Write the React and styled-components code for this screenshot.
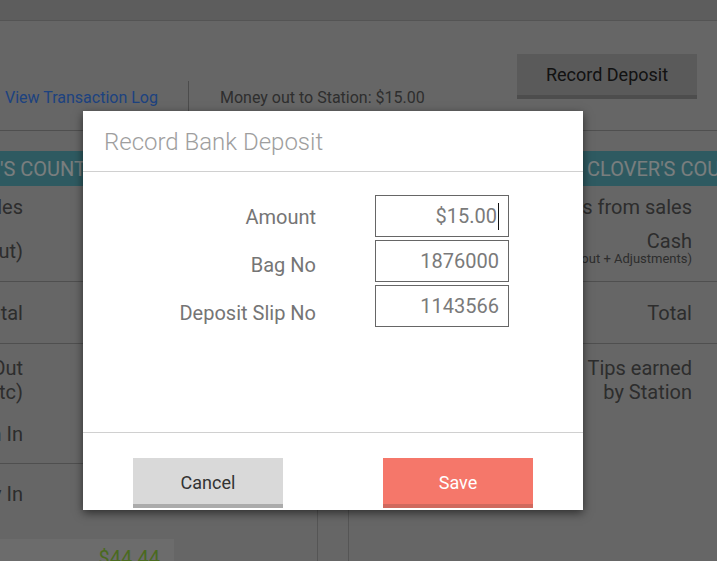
import React from "react";
import styled, { createGlobalStyle } from "styled-components";

const GlobalStyle = createGlobalStyle`
  html, body { margin: 0; padding: 0; }
  body {
    font-family: Roboto, "Noto Sans", "Liberation Sans", sans-serif;
    background: #cccccc;
    overflow: hidden;
  }
  * { box-sizing: border-box; }
`;

const Page = styled.div`
  position: relative;
  width: 717px;
  height: 561px;
  overflow: hidden;
  background: #cccccc;
`;

const TopBar = styled.div`
  height: 21px;
  background: #bababa;
  border-bottom: 1px solid #a8a8a8;
`;

const ActionBar = styled.div`
  height: 110px;
  display: flex;
  border-bottom: 1px solid #9e9e9e;
  padding: 0 20px 0 5px;
`;

const InfoGroup = styled.div`
  align-self: flex-end;
  margin-bottom: 17px;
  height: 32px;
  display: flex;
  align-items: center;
  gap: 30px;
  font-size: 16px;
`;

const LinkText = styled.a`
  color: #3a84ff;
  text-decoration: none;
`;

const VSeparator = styled.span`
  width: 1px;
  align-self: stretch;
  background: #989898;
`;

const InfoText = styled.span`
  color: #5c5c5c;
  margin-left: 1px;
`;

const BarButton = styled.button`
  margin: 33px 0 0 auto;
  align-self: flex-start;
  width: 180px;
  height: 45px;
  border: none;
  border-bottom: 4px solid #9a9a9a;
  background: #b4b4b4;
  color: #242424;
  font-family: inherit;
  font-size: 18px;
  padding: 0;
`;

const Columns = styled.div`
  display: flex;
  align-items: stretch;
  height: 430px;
`;

const Column = styled.div`
  display: flex;
  flex-direction: column;
  min-width: 0;
  overflow: hidden;
  width: ${(p) => (p.$width ? `${p.$width}px` : "auto")};
  flex: ${(p) => (p.$width ? "none" : "1 1 0")};
  margin-left: ${(p) => p.$offset || 0}px;
  border-right: ${(p) => (p.$lineRight ? "1px solid #aaaaaa" : "none")};
  border-left: ${(p) => (p.$lineLeft ? "1px solid #aaaaaa" : "none")};
`;

const ColumnHeader = styled.div`
  flex: none;
  margin-top: 20px;
  height: 35px;
  background: #5cb4c2;
  color: #f2fcfd;
  font-size: 20px;
  text-transform: uppercase;
  display: flex;
  align-items: center;
  white-space: nowrap;
  justify-content: ${(p) => (p.$alignEnd ? "flex-end" : "flex-start")};
  padding-left: ${(p) => p.$padLeft || 0}px;
  padding-right: ${(p) => p.$padRight || 0}px;
`;

const Row = styled.div`
  flex: none;
  height: ${(p) => p.$height}px;
  display: flex;
  flex-direction: column;
  justify-content: ${(p) => (p.$center ? "center" : "flex-start")};
  padding-top: ${(p) => p.$padTop || 0}px;
  padding-right: ${(p) => p.$padRight}px;
  border-bottom: ${(p) => (p.$line ? "1px solid #9e9e9e" : "none")};
`;

const Line = styled.div`
  display: flex;
  justify-content: flex-end;
  white-space: nowrap;
  color: #5a5a5a;
  font-size: ${(p) => p.$size || 20}px;
  line-height: ${(p) => p.$lh || 24}px;
  margin-top: ${(p) => p.$mt || 0}px;
`;

const TotalBox = styled.div`
  flex: none;
  margin-top: 15px;
  width: 174px;
  height: 40px;
  background: #d8d8d8;
  display: flex;
  justify-content: flex-end;
  padding: 7px 14px 0 0;
  font-size: 20px;
  line-height: 24px;
  color: #94d43e;
`;

const Overlay = styled.div`
  position: absolute;
  inset: 0;
  background: rgba(0, 0, 0, 0.5);
`;

const Dialog = styled.div`
  position: absolute;
  left: 83px;
  top: 111px;
  width: 500px;
  height: 399px;
  background: #ffffff;
  box-shadow: 0 3px 9px rgba(0, 0, 0, 0.55);
  display: flex;
  flex-direction: column;
`;

const DialogTitle = styled.div`
  height: 61px;
  border-bottom: 1px solid #d0d0d0;
  display: flex;
  align-items: center;
  padding: 1px 0 0 21px;
  font-size: 24px;
  font-weight: 300;
  color: #9e9e9e;
`;

const Form = styled.div`
  height: 261px;
  border-bottom: 1px solid #d0d0d0;
  display: flex;
`;

const LabelColumn = styled.div`
  width: 233px;
  padding-top: 21px;
  display: flex;
  flex-direction: column;
`;

const FieldLabel = styled.div`
  height: 48px;
  display: flex;
  align-items: center;
  justify-content: flex-end;
  font-size: 20px;
  color: #757575;
`;

const FieldColumn = styled.div`
  margin-left: 59px;
  padding-top: 23px;
  display: flex;
  flex-direction: column;
  gap: 3px;
`;

const Field = styled.div`
  width: 134px;
  height: 42px;
  border: 1px solid #666666;
  display: flex;
  align-items: center;
  justify-content: flex-end;
  padding-right: 9px;
  font-size: 20px;
  color: #7a7a7a;
`;

const Caret = styled.span`
  width: 1px;
  height: 27px;
  background: #111111;
  margin-left: 1px;
`;

const Footer = styled.div`
  flex: 1;
  display: flex;
  padding-top: 25px;
`;

const FooterHalf = styled.div`
  flex: 1;
  display: flex;
  justify-content: center;
  align-items: flex-start;
`;

const DialogButton = styled.button`
  width: 150px;
  height: 50px;
  border: none;
  border-bottom: 4px solid ${(p) => p.$shade};
  background: ${(p) => p.$bg};
  color: ${(p) => p.$fg};
  font-family: inherit;
  font-size: 18px;
  padding: 3px 0 0;
`;

export default function App() {
  return (
    <>
      <GlobalStyle />
      <Page>
        <TopBar />
        <ActionBar>
          <InfoGroup>
            <LinkText>View Transaction Log</LinkText>
            <VSeparator />
            <InfoText>Money out to Station: $15.00</InfoText>
          </InfoGroup>
          <BarButton>Record Deposit</BarButton>
        </ActionBar>
        <Columns>
          <Column $width={318} $lineRight>
            <ColumnHeader $alignEnd $padRight={231}>Employee's Count</ColumnHeader>
            <Row $height={96} $padTop={9} $padRight={294} $line>
              <Line>Payments from sales</Line>
              <Line $mt={20}>(Cash In - Cash Out)</Line>
            </Row>
            <Row $height={62} $padRight={294} $center $line>
              <Line>Total</Line>
            </Row>
            <Row $height={120} $padTop={12} $padRight={294} $line>
              <Line>Paid Out</Line>
              <Line>(tips etc)</Line>
              <Line $mt={18}>Cash In</Line>
            </Row>
            <Row $height={60} $padRight={294} $center>
              <Line>Money In</Line>
            </Row>
            <TotalBox>$44.44</TotalBox>
          </Column>
          <Column $offset={30} $lineLeft>
            <ColumnHeader $padLeft={238}>Clover's Count</ColumnHeader>
            <Row $height={96} $padTop={9} $padRight={25} $line>
              <Line>Payments from sales</Line>
              <Line $mt={11} $lh={22}>Cash</Line>
              <Line $size={13} $lh={14}>(Cash In - Cash out + Adjustments)</Line>
            </Row>
            <Row $height={62} $padRight={25} $center $line>
              <Line>Total</Line>
            </Row>
            <Row $height={120} $padTop={12} $padRight={25}>
              <Line>Tips earned</Line>
              <Line>by Station</Line>
            </Row>
          </Column>
        </Columns>
        <Overlay>
          <Dialog>
            <DialogTitle>Record Bank Deposit</DialogTitle>
            <Form>
              <LabelColumn>
                <FieldLabel>Amount</FieldLabel>
                <FieldLabel>Bag No</FieldLabel>
                <FieldLabel>Deposit Slip No</FieldLabel>
              </LabelColumn>
              <FieldColumn>
                <Field>
                  $15.00
                  <Caret />
                </Field>
                <Field>1876000</Field>
                <Field>1143566</Field>
              </FieldColumn>
            </Form>
            <Footer>
              <FooterHalf>
                <DialogButton $bg="#d9d9d9" $shade="#ababab" $fg="#333333">
                  Cancel
                </DialogButton>
              </FooterHalf>
              <FooterHalf>
                <DialogButton $bg="#f5776a" $shade="#d0695e" $fg="#ffffff">
                  Save
                </DialogButton>
              </FooterHalf>
            </Footer>
          </Dialog>
        </Overlay>
      </Page>
    </>
  );
}
